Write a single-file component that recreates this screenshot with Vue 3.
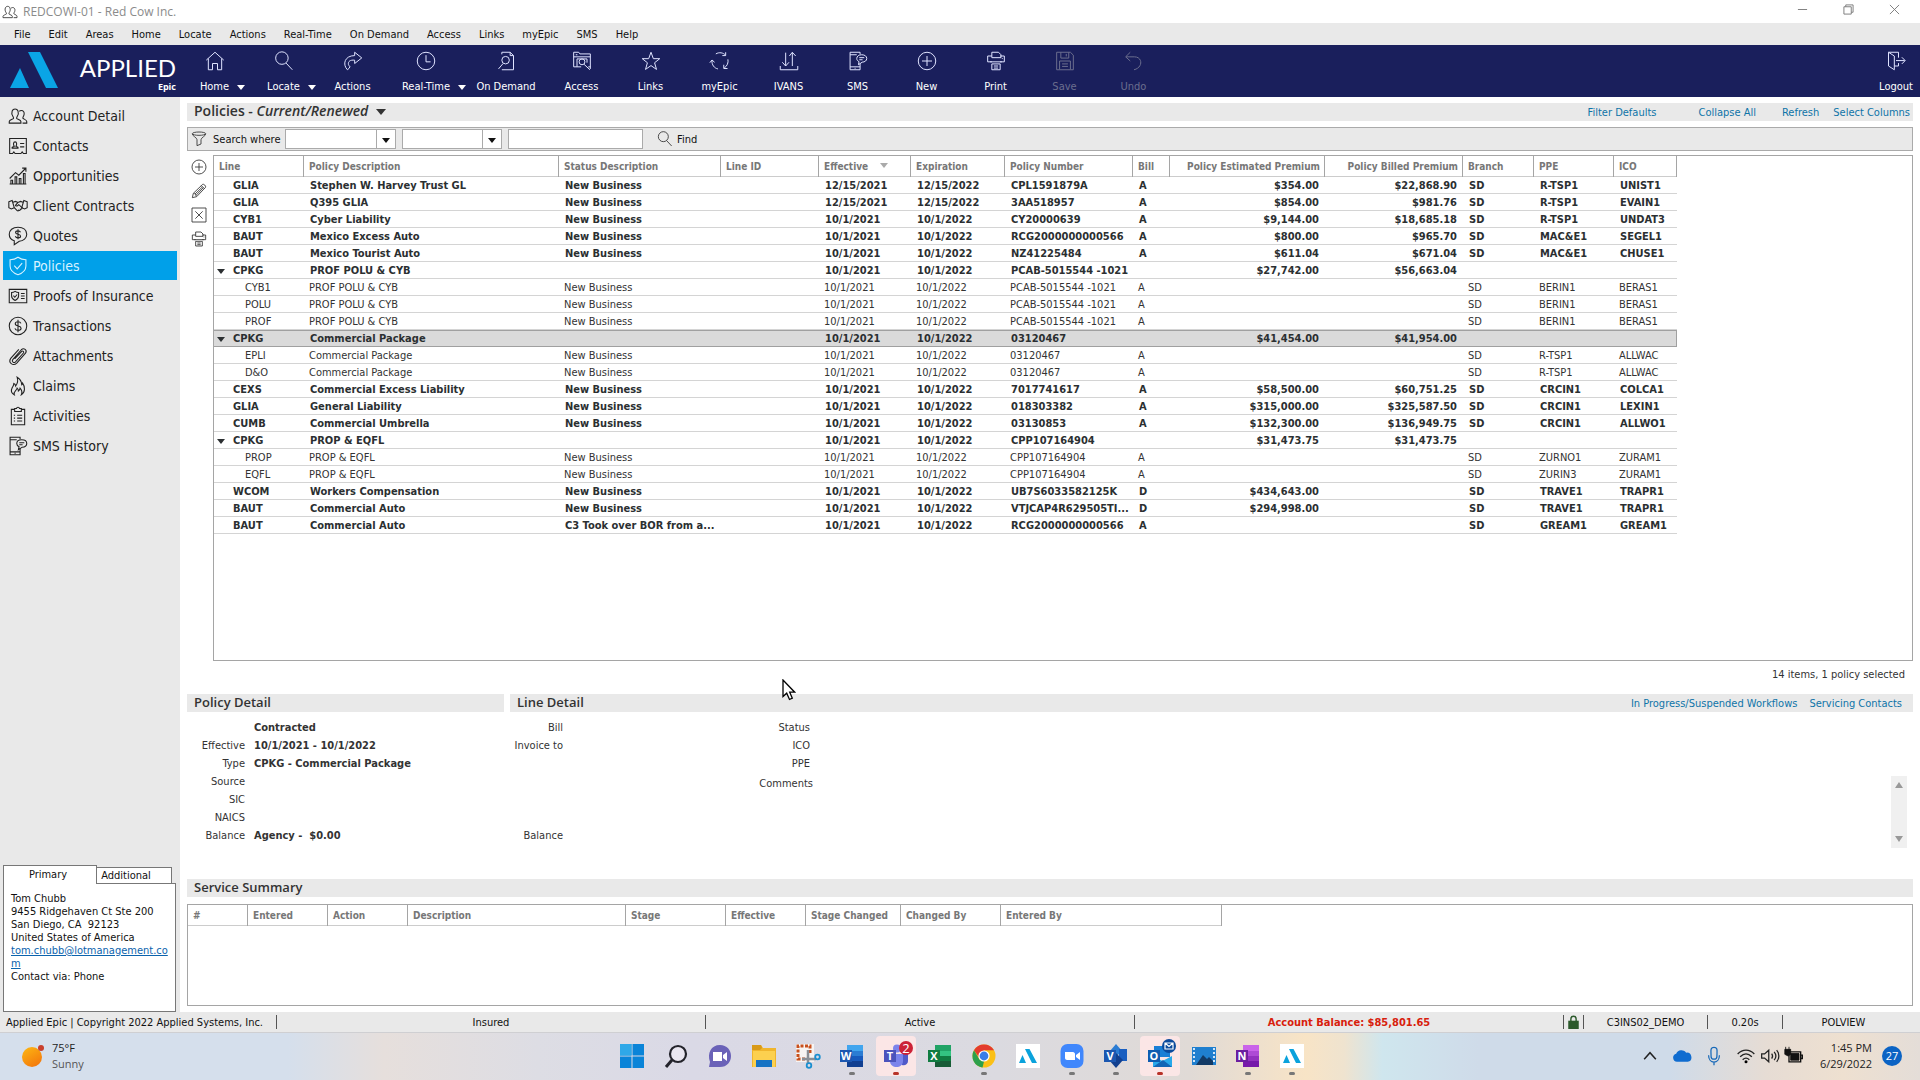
<script setup>
import { ref } from 'vue'

const outline = {
  people: '<path d="M1.500 20.500v-2c0-1.600 4-2.600 5-3.400.5-1.200 0-1.600-.7-2.800C4.600 10.500 4.300 8 5 6c.6-1.600 1.900-2.500 3.500-2.500S11.400 4.400 12 6c.7 2 .4 4.500-.8 6.300-.7 1.200-1.200 1.600-.7 2.800 1 .8 5 1.800 5 3.400v2z"/><path d="M13.500 6.500c.6-.8 1.500-1.200 2.500-1.200 2.400 0 3.600 2 3.400 4.200-.1 1.600-.7 2.600-1.300 3.600-.5.900-.4 1.600.2 2 1.500.9 4.200 1.700 4.200 3.400v2h-5"/>',
  contacts: '<path d="M2 3h20v18h-3.500l-1.500-2-1.500 2h-7L7 19l-1.500 2H2z"/><path d="M5 14.500v-1l2.500-1.200c-1.300-1.800-1.300-5.300 1-5.300s2.300 3.500 1 5.300l2.500 1.200v1zM14.500 9h5M14.500 13h5"/>',
  chart: '<path d="M2 21.500h20M3.500 21v-4h2v4M8.500 21v-8h2v8M13.500 21v-6h2v6M18.500 21V9h2v12"/><path d="M2 15l7-7 4 3 8-8M17 2.500h4.500V7"/>',
  handshake: '<path d="M1 7l4-1.500L7.500 14 4 15.500 1 14zM23 7l-4-1.500L16.500 14l3.500 1.500 3-1.500z"/><path d="M6 7.500l3-1 3 1.200 3-1.200 3 1M12 7.700l-3 3.500c1 1.300 2.500.8 4-.8l4.500 4.200M7.500 14l3.500 3.500c1 .8 2 .2 2-.5 1.200.6 2.200-.2 2-1.200 1.300.2 2-.6 1.600-1.600"/>',
  quote: '<path d="M7.500 22.500v-4.800C3.800 16.700 1.500 13.800 1.500 10 1.500 5 5.500 1.500 12 1.500S22.500 5 22.500 10c0 4.500-4 8-9 8.300z"/><path d="M15 7.500c-.5-1.200-1.600-1.700-3-1.700-1.600 0-2.900.7-2.900 2 0 3 6 1.400 6 4.400 0 1.300-1.400 2-3.100 2-1.600 0-2.700-.6-3.200-1.900M12 4v12"/>',
  shield: '<path d="M12 1.500c3 2.200 6 3 9.500 3V12c0 5-4 8.500-9.500 10.500C6.500 20.500 2.500 17 2.500 12V4.500c3.500 0 6.500-.8 9.500-3z"/><path d="M7.500 11.500l3.500 4 6-7"/>',
  proof: '<path d="M1.500 4h21v16h-21z"/><path d="M8.500 6.500c1.500 1 2.500 1.300 4.200 1.300V12c0 2.500-1.800 4.200-4.200 5.300C6.100 16.200 4.300 14.500 4.300 12V7.800c1.700 0 2.700-.3 4.200-1.300zM6.500 11.500l1.700 2 2.800-3.300M15.500 9h4.500M15.500 12h4.500M15.500 15h4.500"/>',
  dollar: '<circle cx="12" cy="12" r="10.500"/><path d="M15.500 8.800c-.5-1.500-1.800-2-3.500-2-1.800 0-3.300.8-3.300 2.400 0 3.600 7 2 7 5.400 0 1.700-1.600 2.500-3.700 2.500-1.900 0-3.200-.7-3.700-2.300M12 4.500v15"/>',
  clip: '<path d="M8 15.500l8.500-9c1.200-1.200 3.200.4 2 1.900L9 19c-2 2-5-.3-3.300-2.700L16 4.500c3-3 7.500.5 5 4L10.500 20.500c-4.300 4.200-11-.6-7-6L13 4"/>',
  flame: '<path d="M7.500 22.500C4 20.500 3.500 17 5 14c1-2 2-2.300 2-5 1.500.6 2 1.600 2.200 3C11 9.500 12.500 6 11 1.500c4 2.300 5.300 5.500 5.500 9 .6-.4.900-1 1-2 3 4 3.500 11-1.500 14 1.300-3 .8-5.500-1.500-8-.3 2-1 3-2 3.500 0-1.700-.6-2.700-1.500-3.500-.2 3-5 4-3.500 8z"/>',
  clipboard: '<path d="M8 4H4v18.500h16V4h-4"/><path d="M8 6.500V3h2.200c.2-2 3.400-2 3.600 0H16v3.500zM7 11h1.500M11 11h6M7 14.500h1.500M11 14.500h6M7 18h1.500M11 18h6"/>',
  sms: '<path d="M14.500 4V1.500h-12v21h12V15M2.500 4.500h8M2.500 19h12M8 20.800h1"/><path d="M16.500 4.500c3.600 0 6 1.800 6 4.500s-2.400 4.300-5.500 4.400L12.500 16.500l.8-3.700C11.500 12 10.500 10.700 10.500 9c0-2.700 2.400-4.500 6-4.500zM13.500 8h6M13.500 10.500h4"/>',
  home: '<path d="M1.500 11L12 1.500 22.500 11M4 9v13.500h5V15h6v7.500h5V9"/>',
  search: '<circle cx="9.500" cy="8.500" r="7.500"/><path d="M14.500 14.500l7.500 8"/>',
  forward: '<path d="M14 1.500l8.500 6.800L14 15v-4C8.500 10.500 6 12.500 6.500 16c.2 1.500 1 2.200 2 2.600-.5 1.600-1.700 3-3.200 3.900C-1 16 2 5.500 14 5.500z"/>',
  clock: '<circle cx="12" cy="12" r="10.500"/><path d="M12 5v8h5.500"/>',
  demand: '<path d="M7 4V1.500h10l4 4v17H7"/><path d="M17 1.500v4h4"/><circle cx="11.500" cy="11" r="4.500"/><path d="M8.500 15L3 21.500"/>',
  access: '<path d="M11 19H2V1.500h6l1.500 2H22v18M2 7h20M4.500 4.500h2"/><path d="M22 19h-2.500M6 19V9.500h12V14"/><circle cx="12" cy="13" r="3.500"/><path d="M14.500 16l7 6.500"/>',
  star: '<path d="M12 1.500l2.800 7.700h7.700l-6.200 4.900 2.300 8L12 17.500l-6.600 4.600 2.300-8L1.500 9.200h7.700z"/>',
  cycle: '<path d="M7 3.500c4-2.500 9-1.500 11.500 1.500M18.800 1.500v4h-4M21.500 10c.8 4-.8 8-4.500 10.500M16.500 16.500V21H21M9.500 21.500C5 20.500 2.200 16.800 2.300 11.500M-.2 14l2.600-3.200L5.500 13.500"/>',
  updown: '<path d="M1.500 18v4.500h21V18M8 2v16M4 13.500L8 18l4-4.500M16 18V2M12.500 6L16 1.500 20 6"/>',
  plus: '<circle cx="12" cy="12" r="10.500"/><path d="M12 6v12M6 12h12"/>',
  print: '<path d="M7 8V1.500h8l3 3V8M7 13H2V6h5M17 6h5v7h-5M7 8h11"/><path d="M7 15.500h10v7H7zM5 13h14M9.500 18h5M9.500 20.500h5M19 9h1"/>',
  save: '<path d="M2 1.500h16.500L22 5v17.500H2z"/><path d="M7 1.500v7h9.500v-7M13.500 3.500v3M5.500 22V12h13v10M8.500 15.500h7M8.500 18.500h7"/>',
  undo: '<path d="M2.500 7h10c10 0 10.500 13-.5 15.500M7.500 1.500L2 7l5.500 5"/>',
  logout: '<path d="M15 8V1.500H3V18l7 4.500V6L3 1.500M15 14.500V18h-5M12 11.500h10.500M19 7.500l4 4-4 4"/>',
  funnel: '<ellipse cx="12" cy="4" rx="10" ry="2.500"/><path d="M2 4.500c0 3 7 5.500 7 8.500v9l6-2.500V13c0-3 7-5.500 7-8.500"/>',
  pencil: '<path d="M2 22l1.500-6.500L17.500 2c1.500-1 5.500 2.500 4.300 4.500L8.500 20.500zM4 15.500c2 .5 3.500 2 4 4.500M15.500 4l4.500 4.500M6 16.500L17 6M7.500 18.500L18.500 7"/>',
  cross: '<path d="M1.500 1.500h21v21h-21zM6.500 6.500l11 11M17.500 6.500l-11 11"/>',
}

const menus = ['File', 'Edit', 'Areas', 'Home', 'Locate', 'Actions', 'Real-Time', 'On Demand', 'Access', 'Links', 'myEpic', 'SMS', 'Help']

const tools = [
  { label: 'Home', icon: 'home', more: true },
  { label: 'Locate', icon: 'search', more: true },
  { label: 'Actions', icon: 'forward' },
  { label: 'Real-Time', icon: 'clock', more: true, size: 'wide' },
  { label: 'On Demand', icon: 'demand', size: 'wider' },
  { label: 'Access', icon: 'access' },
  { label: 'Links', icon: 'star' },
  { label: 'myEpic', icon: 'cycle' },
  { label: 'IVANS', icon: 'updown' },
  { label: 'SMS', icon: 'sms' },
  { label: 'New', icon: 'plus' },
  { label: 'Print', icon: 'print' },
  { label: 'Save', icon: 'save', off: true },
  { label: 'Undo', icon: 'undo', off: true },
]

const areas = [
  ['Account Detail', 'people'], ['Contacts', 'contacts'], ['Opportunities', 'chart'], ['Client Contracts', 'handshake'],
  ['Quotes', 'quote'], ['Policies', 'shield'], ['Proofs of Insurance', 'proof'], ['Transactions', 'dollar'],
  ['Attachments', 'clip'], ['Claims', 'flame'], ['Activities', 'clipboard'], ['SMS History', 'sms'],
]
const area = ref('Policies')

const columns = [
  ['Line', 90], ['Policy Description', 255], ['Status Description', 162], ['Line ID', 98], ['Effective', 92],
  ['Expiration', 94], ['Policy Number', 128], ['Bill', 37], ['Policy Estimated Premium', 155],
  ['Policy Billed Premium', 138], ['Branch', 71], ['PPE', 80], ['ICO', 63],
]

const N = 'New Business'
const A = '10/1/2021'
const B = '10/1/2022'
const policies = [
  { c: ['GLIA', 'Stephen W. Harvey Trust GL', N, '', '12/15/2021', '12/15/2022', 'CPL1591879A', 'A', '$354.00', '$22,868.90', 'SD', 'R-TSP1', 'UNIST1'] },
  { c: ['GLIA', 'Q395 GLIA', N, '', '12/15/2021', '12/15/2022', '3AA518957', 'A', '$854.00', '$981.76', 'SD', 'R-TSP1', 'EVAIN1'] },
  { c: ['CYB1', 'Cyber Liability', N, '', A, B, 'CY20000639', 'A', '$9,144.00', '$18,685.18', 'SD', 'R-TSP1', 'UNDAT3'] },
  { c: ['BAUT', 'Mexico Excess Auto', N, '', A, B, 'RCG2000000000566', 'A', '$800.00', '$965.70', 'SD', 'MAC&E1', 'SEGEL1'] },
  { c: ['BAUT', 'Mexico Tourist Auto', N, '', A, B, 'NZ41225484', 'A', '$611.04', '$671.04', 'SD', 'MAC&E1', 'CHUSE1'] },
  { open: true, c: ['CPKG', 'PROF POLU & CYB', '', '', A, B, 'PCAB-5015544 -1021', '', '$27,742.00', '$56,663.04', '', '', ''] },
  { child: true, c: ['CYB1', 'PROF POLU & CYB', N, '', A, B, 'PCAB-5015544 -1021', 'A', '', '', 'SD', 'BERIN1', 'BERAS1'] },
  { child: true, c: ['POLU', 'PROF POLU & CYB', N, '', A, B, 'PCAB-5015544 -1021', 'A', '', '', 'SD', 'BERIN1', 'BERAS1'] },
  { child: true, c: ['PROF', 'PROF POLU & CYB', N, '', A, B, 'PCAB-5015544 -1021', 'A', '', '', 'SD', 'BERIN1', 'BERAS1'] },
  { open: true, selected: true, c: ['CPKG', 'Commercial Package', '', '', A, B, '03120467', '', '$41,454.00', '$41,954.00', '', '', ''] },
  { child: true, c: ['EPLI', 'Commercial Package', N, '', A, B, '03120467', 'A', '', '', 'SD', 'R-TSP1', 'ALLWAC'] },
  { child: true, c: ['D&O', 'Commercial Package', N, '', A, B, '03120467', 'A', '', '', 'SD', 'R-TSP1', 'ALLWAC'] },
  { c: ['CEXS', 'Commercial Excess Liability', N, '', A, B, '7017741617', 'A', '$58,500.00', '$60,751.25', 'SD', 'CRCIN1', 'COLCA1'] },
  { c: ['GLIA', 'General Liability', N, '', A, B, '018303382', 'A', '$315,000.00', '$325,587.50', 'SD', 'CRCIN1', 'LEXIN1'] },
  { c: ['CUMB', 'Commercial Umbrella', N, '', A, B, '03130853', 'A', '$132,300.00', '$136,949.75', 'SD', 'CRCIN1', 'ALLWO1'] },
  { open: true, c: ['CPKG', 'PROP & EQFL', '', '', A, B, 'CPP107164904', '', '$31,473.75', '$31,473.75', '', '', ''] },
  { child: true, c: ['PROP', 'PROP & EQFL', N, '', A, B, 'CPP107164904', 'A', '', '', 'SD', 'ZURNO1', 'ZURAM1'] },
  { child: true, c: ['EQFL', 'PROP & EQFL', N, '', A, B, 'CPP107164904', 'A', '', '', 'SD', 'ZURIN3', 'ZURAM1'] },
  { c: ['WCOM', 'Workers Compensation', N, '', A, B, 'UB7S6033582125K', 'D', '$434,643.00', '', 'SD', 'TRAVE1', 'TRAPR1'] },
  { c: ['BAUT', 'Commercial Auto', N, '', A, B, 'VTJCAP4R629505TI...', 'D', '$294,998.00', '', 'SD', 'TRAVE1', 'TRAPR1'] },
  { c: ['BAUT', 'Commercial Auto', 'C3 Took over BOR from a...', '', A, B, 'RCG2000000000566', 'A', '', '', 'SD', 'GREAM1', 'GREAM1'] },
]

const policyFields = [['', 'Contracted'], ['Effective', '10/1/2021 - 10/1/2022'], ['Type', 'CPKG - Commercial Package'], ['Source', ''], ['SIC', ''], ['NAICS', ''], ['Balance', 'Agency -\u00a0 $0.00']]
const lineFields = ['Bill', 'Invoice to', '', '', '', '', 'Balance']
const summary = [['#', 60], ['Entered', 80], ['Action', 80], ['Description', 218], ['Stage', 100], ['Effective', 80], ['Stage Changed', 95], ['Changed By', 100], ['Entered By', 221]]

const office = (ch, dark, shades) =>
  `<path d="M7 1h16v6H7z" fill="${shades[0]}"/><path d="M7 7h16v5H7z" fill="${shades[1]}"/><path d="M7 12h16v5H7z" fill="${shades[2]}"/><path d="M7 17h16v6H7z" fill="${shades[3]}"/><path d="M0 6h12v12H0z" fill="${dark}"/><text x="6" y="16" text-anchor="middle" font-size="11" font-weight="700" fill="#fff">${ch}</text>`
const applied = '<path d="M0 0h24v24H0z" fill="#fff"/><path d="M3 19h7l-3.500-8zM9 5h4.500L21 19h-5z" fill="#0aa2dc"/>'
const apps = [
  { name: 'Start', art: '<path d="M0 0h11.500v11.500H0zM12.500 0H24v11.500H12.500zM0 12.500h11.500V24H0zM12.500 12.500H24V24H12.500z" fill="#0a84d8"/><path d="M0 0h11.500v11.500H0z" fill="#2fa8e8"/>' },
  { name: 'Search', art: '<circle cx="14" cy="10" r="8" fill="#e9e6f0" stroke="#23232b" stroke-width="2.200"/><path d="M8 16l-6 7" stroke="#23232b" stroke-width="3"/>' },
  { name: 'Chat', art: '<path d="M12 1c7 0 11 5 11 11s-4 11-11 11H1l1-5C-1 9 3 1 12 1z" fill="#6a62b8"/><path d="M5 8h9v9H5zM15 11l4-3v9l-4-3z" fill="#fff"/>' },
  { name: 'File Explorer', art: '<path d="M0 1h9l2 3h13v19H0z" fill="#f0b52c"/><path d="M1 7h22v16H1z" fill="#fcd04f"/><path d="M0 1h9l1 3-2 2H0z" fill="#d99a18"/><path d="M4 16h16v7H4z" fill="#1673c4"/>' },
  { name: 'Snipping Tool', art: '<path d="M0 0h18v18H0z" fill="#f7f4f2"/><path d="M14 9V2H2v13h7" fill="none" stroke="#c8501e" stroke-width="3" stroke-dasharray="3 1.500"/><path d="M12 6v14M6 15h14" stroke="#8a8f96" stroke-width="2.500"/><circle cx="13" cy="21.500" r="2.300" fill="none" stroke="#1a8fd0" stroke-width="1.800"/><circle cx="21.500" cy="13" r="2.300" fill="none" stroke="#1a8fd0" stroke-width="1.800"/>' },
  { name: 'Word', run: true, art: office('W', '#1b57b0', ['#41a5ee', '#2b7cd3', '#185abd', '#103f91']) },
  { name: 'Teams', lit: true, run: true, art: '<circle cx="20" cy="7" r="3" fill="#5059c9"/><circle cx="13" cy="4.500" r="4" fill="#7b83eb"/><path d="M14 10h10v7c0 3-3 5-6 4z" fill="#5059c9"/><path d="M6 10h13v7c0 8-13 8-13 0z" fill="#7b83eb"/><path d="M0 6h12v12H0z" fill="#4b53bc"/><text x="6" y="16" text-anchor="middle" font-size="11" font-weight="700" fill="#fff">T</text><circle cx="22" cy="4" r="7" fill="#cc2136"/><text x="22" y="9" text-anchor="middle" font-size="13" fill="#fff">2</text>' },
  { name: 'Excel', art: office('X', '#107c41', ['#21a366', '#33c481', '#107c41', '#185c37']) },
  { name: 'Chrome', run: true, art: '<circle cx="12" cy="12" r="11.500" fill="#fbc016"/><path d="M2 6.300A11.500 11.500 0 0 1 22 6.300H12L8 14.500z" fill="#e33b2e"/><path d="M2 6.300L7.500 15.500 12 17.500l-1.500 6A11.500 11.500 0 0 1 2 6.300z" fill="#2da04c"/><circle cx="12" cy="12" r="5.600" fill="#fff"/><circle cx="12" cy="12" r="4.400" fill="#3a7de8"/>' },
  { name: 'Applied', art: applied },
  { name: 'Zoom', run: true, art: '<rect width="23" height="24" x=".5" rx="7" fill="#4087fc"/><path d="M5 8h8c1 0 2 1 2 2v6H7c-1 0-2-1-2-2zM16 11l4-3v8l-4-3z" fill="#fff"/>' },
  { name: 'Visio', run: true, art: '<path d="M12 0l6 7-6 6-6-6z" fill="#2b7cd3"/><path d="M15 5h8v12h-8z" fill="#1a5fc0"/><path d="M12 9l7 7-7 8-7-8z" fill="#12408f"/><path d="M0 6h12v12H0z" fill="#1b57b0"/><text x="6" y="16" text-anchor="middle" font-size="11" font-weight="700" fill="#fff">V</text>' },
  { name: 'Outlook', lit: true, run: true, art: '<path d="M6 2h16v11H6z" fill="#1a7fd6"/><path d="M5 12l9.500 5L24 12v11H5z" fill="#28a8ea"/><path d="M5 23l10-7 9 7z" fill="#1265b5"/><path d="M0 6h12v12H0z" fill="#0f5cb0"/><text x="6" y="16" text-anchor="middle" font-size="11" font-weight="700" fill="#fff">O</text><circle cx="21" cy="2" r="7" fill="#0b4a9c"/><path d="M17-1h8v6h-8zM17-1l4 3.500L25-1" fill="none" stroke="#fff" stroke-width="1.200"/>' },
  { name: 'Movies', art: '<path d="M0 3h24v18H0z" fill="#1f7fcf"/><path d="M4 21l7-10 4 4 2-2 4 4v4z" fill="#123a66"/><path d="M2 4v16M22 4v16" stroke="#cfe6fa" stroke-width="2" stroke-dasharray="2 2"/>' },
  { name: 'OneNote', run: true, art: office('N', '#6b1fa0', ['#ca64ea', '#ae4bd5', '#9332bf', '#7719aa']) },
  { name: 'Applied Epic', run: true, art: applied },
]
</script>

<template>
  <div class="app">
    <header class="title">
      <svg class="ico dark" viewBox="0 0 24 24" v-html="outline.people" />
      <h1>REDCOWI-01 - Red Cow Inc.</h1>
      <div class="win">
        <button aria-label="Minimize"><svg viewBox="0 0 12 12"><path d="M1 6h10" /></svg></button>
        <button aria-label="Restore"><svg viewBox="0 0 12 12"><path d="M1 3h8v8H1zM3 3V1h8v8H9" /></svg></button>
        <button aria-label="Close"><svg viewBox="0 0 12 12"><path d="M1 1l10 10M11 1L1 11" /></svg></button>
      </div>
    </header>

    <nav class="menu">
      <button v-for="m in menus" :key="m">{{ m }}</button>
    </nav>

    <div class="toolbar">
      <div class="brand">
        <svg class="mark" viewBox="0 0 48 36"><path d="M0 36L10 16l9 20zM18 0h12l18 36H36z" fill="#0aa5e6" /></svg>
        <div class="word"><span class="name">APPLIED</span><span class="epic">Epic</span></div>
      </div>
      <button v-for="t in tools" :key="t.label" class="tool" :class="[t.size, { off: t.off }]" :disabled="t.off">
        <svg class="ico" viewBox="0 0 24 24" v-html="outline[t.icon]" />
        <span class="cap" :class="{ more: t.more }">{{ t.label }}<i v-if="t.more" class="caret" /></span>
      </button>
      <button class="tool exit">
        <svg class="ico" viewBox="0 0 24 24" v-html="outline.logout" />
        <span class="cap">Logout</span>
      </button>
    </div>

    <div class="body">
      <aside class="side">
        <nav>
          <button v-for="a in areas" :key="a[0]" :class="{ on: area === a[0] }" @click="area = a[0]">
            <svg class="ico" viewBox="0 0 24 24" v-html="outline[a[1]]" />{{ a[0] }}
          </button>
        </nav>
        <div class="card">
          <div class="tabs"><button class="tab on">Primary</button><button class="tab">Additional</button><span class="rest" /></div>
          <address>
            Tom Chubb<br>9455 Ridgehaven Ct Ste 200<br>San Diego, CA&nbsp; 92123<br>United States of America<br>
            <a href="mailto:tom.chubb@lotmanagement.com">tom.chubb@lotmanagement.com</a><br>Contact via: Phone
          </address>
        </div>
      </aside>

      <main class="main">
        <div class="bar top">
          <h2>Policies - <em>Current/Renewed</em></h2><i class="caret big" />
          <div class="links">
            <a href="#" class="far">Filter Defaults</a><a href="#" class="mid">Collapse All</a><a href="#">Refresh</a><a href="#">Select Columns</a>
          </div>
        </div>

        <form class="search" @submit.prevent>
          <svg class="ico dark" viewBox="0 0 24 24" v-html="outline.funnel" />
          <label for="field">Search where</label>
          <div class="combo first"><select id="field"><option></option></select><span class="drop"><i class="caret" /></span></div>
          <div class="combo"><select aria-label="Condition"><option></option></select><span class="drop"><i class="caret" /></span></div>
          <input type="text" aria-label="Value">
          <button class="find"><svg class="ico dark" viewBox="0 0 24 24" v-html="outline.search" /><span>Find</span></button>
        </form>

        <div class="list">
          <div class="acts">
            <button v-for="k in ['plus', 'pencil', 'cross', 'print']" :key="k" :aria-label="k"><svg class="ico dark" viewBox="0 0 24 24" v-html="outline[k]" /></button>
          </div>
          <div class="frame">
            <table class="grid policies">
              <colgroup><col v-for="c in columns" :key="c[0]" :style="{ width: c[1] + 'px' }"></colgroup>
              <thead><tr><th v-for="(c, i) in columns" :key="c[0]" :class="{ num: i === 8 || i === 9 }">{{ c[0] }}<i v-if="i === 4" class="caret sort" /></th></tr></thead>
              <tbody>
                <tr v-for="(r, k) in policies" :key="k" :class="{ child: r.child, selected: r.selected }">
                  <td v-for="(v, i) in r.c" :key="i" :class="{ num: i === 8 || i === 9, line: i === 0 }"><i v-if="i === 0 && r.open" class="caret fold" />{{ v }}</td>
                </tr>
              </tbody>
            </table>
          </div>
        </div>
        <p class="count">14 items, 1 policy selected</p>

        <div class="details">
          <section class="policy">
            <div class="bar"><h2>Policy Detail</h2></div>
            <dl><template v-for="f in policyFields" :key="f[0]"><dt>{{ f[0] }}</dt><dd>{{ f[1] }}</dd></template></dl>
          </section>
          <section class="line-detail">
            <div class="bar"><h2>Line Detail</h2>
              <div class="links near"><a href="#">In Progress/Suspended Workflows</a><a href="#">Servicing Contacts</a></div>
            </div>
            <div class="fields">
              <div class="names"><span v-for="(f, i) in lineFields" :key="i">{{ f }}</span></div>
              <div class="names second"><span>Status</span><span>ICO</span><span>PPE</span><label for="comments">Comments</label></div>
              <textarea id="comments" readonly />
              <div class="scroll"><i class="caret up" /><i class="caret down" /></div>
            </div>
          </section>
        </div>

        <div class="bar"><h2>Service Summary</h2></div>
        <div class="frame service">
          <table class="grid">
            <colgroup><col v-for="c in summary" :key="c[0]" :style="{ width: c[1] + 'px' }"></colgroup>
            <thead><tr><th v-for="c in summary" :key="c[0]">{{ c[0] }}</th></tr></thead>
          </table>
        </div>
      </main>
    </div>

    <footer class="status">
      <span class="copy">Applied Epic | Copyright 2022 Applied Systems, Inc.</span>
      <span>Insured</span><span>Active</span><span class="due">Account Balance: $85,801.65</span>
      <span class="lock"><svg viewBox="0 0 12 16"><path d="M3 7V4.500c0-4 6-4 6 0V7" fill="none" stroke="#2c5a2c" stroke-width="1.600" /><path d="M0 6.500h12V16H0z" fill="#2c5a2c" /></svg></span>
      <span class="db">C3INS02_DEMO</span><span class="time">0.20s</span><span class="view">POLVIEW</span>
    </footer>

    <footer class="taskbar">
      <div class="weather">
        <svg viewBox="0 0 24 24"><defs><linearGradient id="sun" x2=".6" y2="1"><stop stop-color="#fdb913" /><stop offset="1" stop-color="#f47b0c" /></linearGradient></defs><circle cx="11" cy="13" r="10" fill="url(#sun)" /><circle cx="20" cy="4" r="3" fill="#c9402c" /></svg>
        <div><b>75°F</b><br>Sunny</div>
      </div>
      <div class="apps">
        <button v-for="a in apps" :key="a.name" :aria-label="a.name" :class="{ lit: a.lit, run: a.run }"><svg viewBox="0 0 24 24" v-html="a.art" /></button>
      </div>
      <div class="tray">
        <svg viewBox="0 0 24 24"><path d="M5 16l7-8 7 8" fill="none" stroke="#222" stroke-width="1.800" /></svg>
        <svg viewBox="0 0 24 24"><path d="M6 19a5 5 0 0 1-1-9.800A7 7 0 0 1 17 8a5.600 5.600 0 0 1 2 11z" fill="#0f6cd0" /></svg>
        <svg viewBox="0 0 24 24"><path d="M12 1.500c-5 0-3.500 5-3.500 11 0 4.500 7 4.500 7 0 0-6 1.500-11-3.500-11zM5.500 11c0 11 13 11 13 0M12 19v4" fill="none" stroke="#1668b8" stroke-width="1.500" /></svg>
        <div class="trio">
          <svg viewBox="0 0 24 24"><path d="M2 9.500c6-6 14-6 20 0M5 13c4.500-4.500 9.500-4.500 14 0M8 16.500c2.500-2.500 5.500-2.500 8 0" fill="none" stroke="#222" stroke-width="1.600" /><circle cx="12" cy="19" r="1.800" /></svg>
          <svg viewBox="0 0 24 24"><path d="M2 9.500v5h3.500l5 4.500V5l-5 4.500zM14 9c1.500 2 1.500 4 0 6M17 7c2.500 3 2.500 7 0 10M20 5c3.500 4 3.500 10 0 14" fill="none" stroke="#222" stroke-width="1.500" /></svg>
          <svg viewBox="0 0 24 24"><path d="M6 7h14v12H6zM20 11h2v4h-2" fill="none" stroke="#111" stroke-width="1.600" /><path d="M8 9h10v8H8zM1 4h7v6l-3 2-4-2zM2 1v4M6 1v4" fill="#111" stroke="#111" /></svg>
        </div>
        <div class="when">1:45 PM<br>6/29/2022</div>
        <span class="badge">27</span>
      </div>
    </footer>

    <svg class="cursor" viewBox="0 0 14 22"><path d="M1 1v16.500l3.700-3.300L7.500 20.500l2.800-1.300-2.600-6h5z" fill="#fff" stroke="#000" stroke-width="1.300" /></svg>
  </div>
</template>

<style>
html, body { margin: 0; background: #fff; }
</style>

<style scoped>
* { box-sizing: border-box; }
.app { position: relative; display: flex; flex-direction: column; min-height: 100vh; font: 11px/14px 'DejaVu Sans Condensed', 'DejaVu Sans', sans-serif; color: #111; overflow: hidden; }
button { font: inherit; color: inherit; border: 0; padding: 0; margin: 0; background: none; white-space: nowrap; }
h1, h2, p, dl, dd { margin: 0; }
a { color: #0e74a8; text-decoration: none; white-space: nowrap; }
.ico { width: 20px; height: 20px; flex: none; fill: none; stroke: currentColor; stroke-width: 1.300; overflow: visible; }
.dark { color: #333; }
.caret { display: inline-block; border: 4px solid transparent; border-top: 5px solid currentColor; border-bottom: 0; }

.title { display: flex; align-items: center; height: 23px; padding-left: 2px; }
.title .ico { width: 16px; height: 16px; }
.title h1 { flex: 1; margin-left: 5px; font: 400 12px/16px 'Open Sans', sans-serif; color: #8b8b8b; }
.win { display: flex; padding-right: 3px; }
.win button { width: 46px; height: 23px; }
.win svg { width: 11px; height: 11px; fill: none; stroke: #777; }

.menu { display: flex; gap: 18px; height: 22px; padding: 2px 0 0 14px; background: #e9e9e9; }

.toolbar { display: flex; height: 52px; background: #1a1f5c; color: #fff; }
.brand { display: flex; width: 180px; padding: 7px 0 0 10px; }
.mark { width: 48px; height: 36px; }
.word { display: flex; flex-direction: column; align-items: flex-end; flex: 1; padding-right: 4px; }
.name { font: 400 24px/28px Lato, sans-serif; margin-top: 2px; }
.epic { font: 700 9px/10px 'Open Sans', sans-serif; }
.tool { display: flex; flex-direction: column; align-items: center; width: 69px; padding-top: 6px; }
.tool .ico { color: #dfe3ff; stroke-width: 1.200; }
.tool.wide { width: 78px; }
.tool.wider { width: 82px; }
.tool.off, .tool.off .ico { color: #6b6e8e; }
.tool.exit { width: 48px; margin-left: auto; }
.cap { margin-top: 9px; }
.cap.more { display: flex; align-items: center; gap: 8px; padding-left: 16px; }

.body { display: flex; flex: 1; }
.side { display: flex; flex-direction: column; justify-content: space-between; width: 180px; padding: 4px 4px 0 3px; background: #e9e9e9; }
.side nav button { display: flex; align-items: center; gap: 5px; width: 174px; height: 30px; padding-left: 5px; border: solid #e9e9e9; border-width: 0 0 1px; font-size: 14px; color: #222; }
.side nav .on { background: #00a0e9; color: #d8f2ff; }
.tabs { display: flex; align-items: flex-end; }
.tab { height: 17px; width: 75px; border: 1px solid #777; border-left: 0; background: #fff; padding-right: 16px; }
.tab.on { width: 94px; height: 19px; border-left: 1px solid #777; border-bottom: 0; padding-right: 4px; }
.rest { flex: 1; border-bottom: 1px solid #777; }
address { height: 128px; padding: 8px 7px 0; border: 1px solid #777; border-top: 0; background: #fff; font-style: normal; line-height: 13px; overflow-wrap: anywhere; }
address a { white-space: normal; color: #0b63ad; text-decoration: underline; }

.main { display: flex; flex-direction: column; flex: 1; min-width: 0; padding: 6px 7px 6px; }
.bar { display: flex; align-items: flex-start; height: 18px; padding-left: 7px; background: #e9e9e9; color: #333; }
.bar h2 { font: 600 13px/16px 'Open Sans', sans-serif; }
.top h2 { font-size: 14px; }
.big { margin: 6px 0 0 8px; border-width: 6px 5px 0; }
.links { display: flex; gap: 14px; margin-left: auto; padding: 3px 3px 0 0; }
.links .far { margin-right: 28px; }
.links .mid { margin-right: 12px; }
.links.near { gap: 12px; padding-right: 11px; }

.search { display: flex; align-items: center; gap: 6px; height: 24px; margin: 6px 0 4px; padding-left: 3px; border: 1px solid #aaa; background: #e9e9e9; }
.search .ico { width: 16px; height: 16px; }
.search label { width: 66px; padding-top: 2px; white-space: nowrap; }
.combo { display: flex; width: 100px; height: 20px; border: 1px solid #aaa; background: #fff; }
.combo.first { width: 111px; }
.combo select { appearance: none; flex: 1; min-width: 0; border: 0; background: #fff; }
.drop { display: flex; align-items: center; justify-content: center; width: 19px; padding-top: 2px; border-left: 1px solid #aaa; }
.search input { width: 135px; height: 20px; border: 1px solid #aaa; background: #fff; font: inherit; }
.find { display: flex; align-items: center; gap: 4px; margin-left: 8px; }
.find span { padding-top: 2px; }

.list { display: flex; flex: 1; }
.acts { display: flex; flex-direction: column; align-items: center; gap: 8px; width: 26px; padding: 4px 2px 0 0; }
.acts button, .acts .ico { display: block; width: 16px; height: 16px; }
.frame { flex: 1; border: 1px solid #a5a5a5; overflow: hidden; }
.grid { width: 0; table-layout: fixed; border-collapse: separate; border-spacing: 0; }
.grid th { height: 21px; padding: 0 4px 0 5px; border: solid #a5a5a5; border-width: 0 1px 0 0; box-shadow: inset 0 -1px #ccc; font-size: 10px; font-weight: 700; text-align: left; color: #777; white-space: nowrap; }
.grid td { height: 17px; padding: 2px 0 0 6px; border-bottom: 1px solid #d4d4d4; font-weight: 700; line-height: 14px; white-space: nowrap; color: #2b2f31; }
.grid .num { text-align: right; padding-right: 6px; }
.grid th.num { padding-right: 4px; }
.grid .line { position: relative; padding-left: 19px; }
.grid .child td { font-weight: 400; padding-left: 5px; color: #333; }
.grid .child .line { padding-left: 31px; }
.grid .selected td { background: #dadada; border-bottom-color: #a0a0a0; box-shadow: inset 0 1px #a0a0a0; }
.grid .selected td:last-child { border-right: 1px solid #a0a0a0; }
.fold { position: absolute; left: 3px; top: 7px; }
.sort { margin: 0 0 2px 12px; color: #aaa; }
.count { height: 33px; padding: 7px 8px 0; text-align: right; color: #333; }

.details { display: flex; gap: 6px; height: 185px; color: #333; }
.policy { width: 317px; }
.line-detail { flex: 1; }
dl { display: grid; grid-template-columns: 58px 1fr; column-gap: 9px; grid-auto-rows: 18px; line-height: 18px; padding-top: 7px; }
dt, .names { text-align: right; }
dd { font-weight: 700; }
.fields { display: flex; padding: 7px 6px 0 0; line-height: 18px; }
.names { display: grid; grid-auto-rows: 18px; width: 53px; white-space: nowrap; }
.names.second { width: 250px; align-content: start; }
.second span { padding-right: 3px; }
.second label { padding-top: 2px; }
textarea { flex: 1; height: 72px; margin-top: 57px; border: 0; resize: none; }
.scroll { display: flex; flex-direction: column; justify-content: space-between; align-items: center; width: 16px; height: 72px; margin-top: 57px; padding: 6px 0; background: #f0f0f0; color: #999; }
.up { border: 4px solid transparent; border-bottom: 6px solid currentColor; border-top: 0; }
.down { border-top-width: 6px; }
.service { flex: none; height: 102px; margin-top: 7px; }

.status { display: flex; align-items: center; height: 20px; padding-right: 16px; background: #e9e9e9; }
.status span { flex: 1; height: 14px; border-right: 1px solid #555; line-height: 16px; text-align: center; white-space: nowrap; }
.status .copy { flex: none; width: 277px; padding-left: 6px; text-align: left; }
.status .due { color: #d8200c; font-weight: 700; }
.status .lock { flex: none; width: 20px; }
.lock svg { width: 11px; height: 14px; }
.status .db { flex: none; width: 124px; }
.status .time { flex: none; width: 75px; }
.status .view { flex: none; width: 121px; border: 0; }

.taskbar { display: flex; align-items: center; justify-content: space-between; height: 48px; padding-right: 3px; box-shadow: inset 0 1px #cfcfd2; font: 11px/16px 'Open Sans', sans-serif; background: linear-gradient(90deg, #d5dfec 0, #d5dfec 15%, #e6dfdc 20%, #dddde4 28%, #dad9e6 36%, #dbdae0 52%, #e0dad6 62%, #f8e4c6 68%, #efe3cf 70%, #cfe6ee 72%, #cfdbe9 77%, #cfdbe9 87%, #e6dcd4 92%, #eee0d0 96%, #e4ddd8 100%); }
.weather { display: flex; align-items: center; gap: 7px; flex: 1; padding-left: 21px; color: #555; }
.weather svg { width: 24px; height: 24px; }
.weather b { font-weight: 400; color: #222; }
.apps { display: flex; gap: 4px; }
.apps button { position: relative; display: flex; align-items: center; justify-content: center; width: 40px; height: 40px; border-radius: 4px; }
.apps svg { width: 24px; height: 24px; overflow: visible; font-family: 'Open Sans', sans-serif; }
.apps .lit { background: #fbe6e6; }
.apps .run::after { content: ''; position: absolute; left: 17px; bottom: 1px; width: 6px; height: 3px; border-radius: 2px; background: #777; }
.apps .lit::after { background: #b83228; }
.tray { display: flex; align-items: center; justify-content: flex-end; gap: 12px; flex: 1; padding-right: 15px; color: #222; }
.tray svg { display: block; width: 20px; height: 20px; }
.trio { display: flex; gap: 4px; }
.when { width: 56px; text-align: right; }
.badge { width: 20px; height: 20px; margin-left: -2px; border-radius: 10px; background: #0b63c4; color: #fff; line-height: 20px; text-align: center; }

.cursor { position: absolute; left: 782px; top: 679px; width: 14px; height: 22px; }
</style>
